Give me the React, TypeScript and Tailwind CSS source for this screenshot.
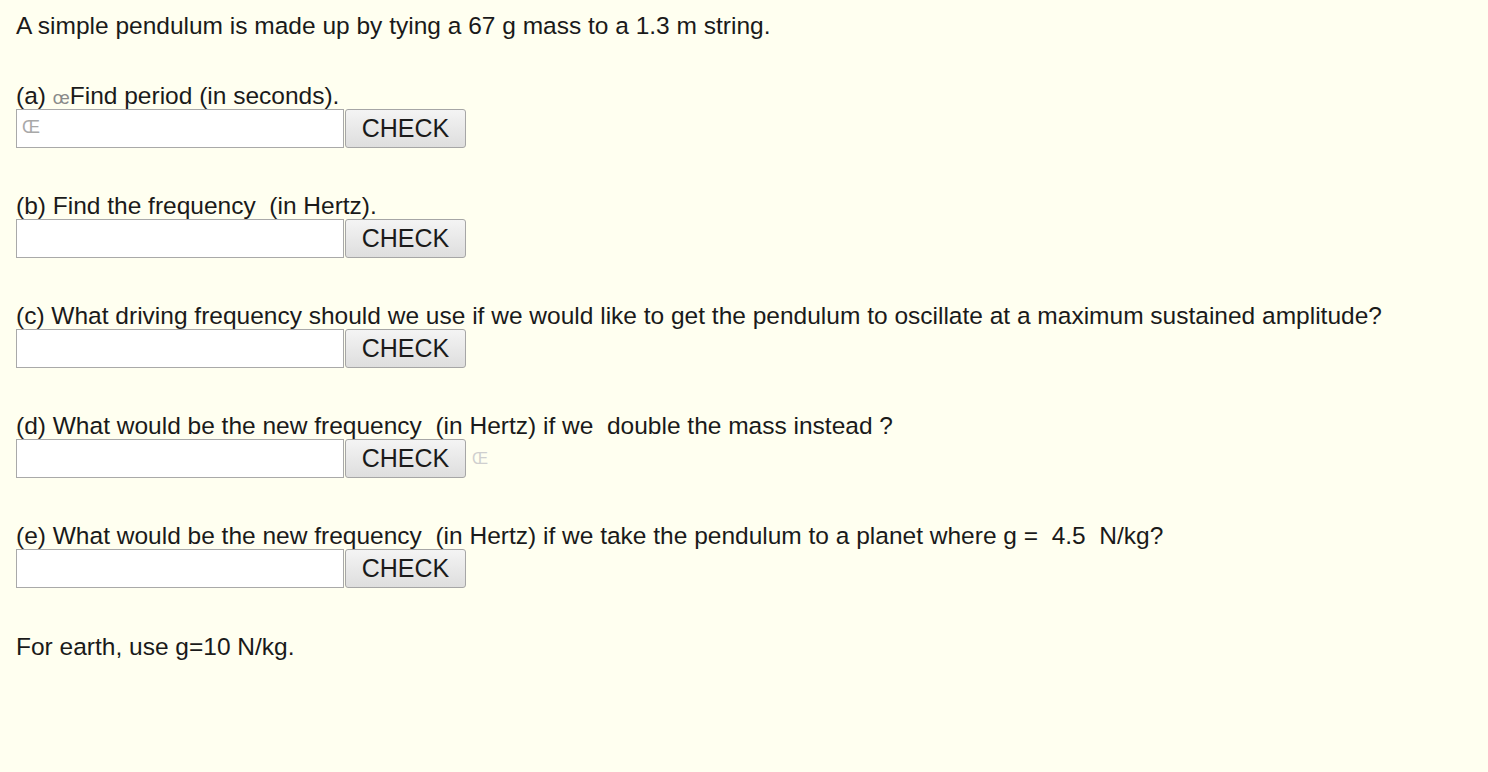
import React from "react";

interface Part {
  id: string;
  label: React.ReactNode;
  placeholder?: string;
  mark?: boolean;
}

const parts: Part[] = [
  {
    id: "a",
    label: (
      <>
        (a) <span className="text-[18px] leading-none text-[#8a8a8a]">œ</span>Find period (in seconds).
      </>
    ),
    placeholder: "Œ",
  },
  { id: "b", label: "(b) Find the frequency  (in Hertz)." },
  {
    id: "c",
    label:
      "(c) What driving frequency should we use if we would like to get the pendulum to oscillate at a maximum sustained amplitude?",
  },
  {
    id: "d",
    label: "(d) What would be the new frequency  (in Hertz) if we  double the mass instead ?",
    mark: true,
  },
  {
    id: "e",
    label: "(e) What would be the new frequency  (in Hertz) if we take the pendulum to a planet where g =  4.5  N/kg?",
  },
];

function AnswerRow({ part, first }: { part: Part; first: boolean }) {
  return (
    <div className={first ? "mt-[43px]" : "mt-[44px]"}>
      <p className="h-[27px] whitespace-pre leading-[27px]">{part.label}</p>
      <div className="flex items-center">
        <div className="relative w-[328px] h-[39px] bg-white border border-[#a9a9a9]">
          {part.placeholder && (
            <span className="absolute left-[5px] top-[8px] text-[18px] leading-none text-[#a8a8a8]">
              {part.placeholder}
            </span>
          )}
        </div>
        <button
          type="button"
          className="ml-px w-[121px] h-[39px] flex items-center justify-center rounded-[3px] border border-[#a6a6a6] bg-gradient-to-b from-[#f4f4f4] to-[#dedede] text-[25px] leading-none text-[#1a1a1a]"
        >
          CHECK
        </button>
        {part.mark && <span className="ml-[6px] text-[16px] text-[#cfcfcf]">Œ</span>}
      </div>
    </div>
  );
}

export default function App() {
  return (
    <div
      className="min-h-[772px] w-full bg-[#fffff0] pt-[12px] pl-[16px] text-[24.5px] text-[#1a1a1a]"
      style={{ fontFamily: '"Liberation Sans", Arial, sans-serif' }}
    >
      <p className="leading-[27px]">A simple pendulum is made up by tying a 67 g mass to a 1.3 m string.</p>
      {parts.map((p, i) => (
        <AnswerRow key={p.id} part={p} first={i === 0} />
      ))}
      <p className="mt-[45px] leading-[27px]">For earth, use g=10 N/kg.</p>
    </div>
  );
}
